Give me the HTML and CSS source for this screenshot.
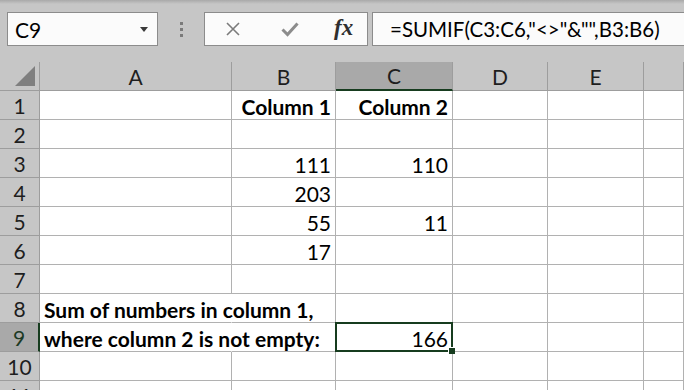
FILE: index.html
```html
<!DOCTYPE html>
<html lang="en">
<head>
    <meta charset="UTF-8">
    <title>SUMIF - Sheet</title>
    <link rel="stylesheet" href="styles.css">
</head>
<body>

    <div class="app">
        <!-- BARRA DE FÓRMULAS -->
        <div class="formula-bar">
            <div class="name-box">
                <span>C9</span>
                <span class="name-arrow"></span>
            </div>
            <div class="grip">
                <span></span><span></span><span></span>
            </div>
            <div class="fx-box">
                <svg class="icon-cancel" width="16" height="16" viewBox="0 0 16 16">
                    <path d="M2 2 L14 14 M14 2 L2 14" stroke="#7b7b7b" stroke-width="1.6" fill="none"/>
                </svg>
                <svg class="icon-enter" width="18" height="16" viewBox="0 0 18 16">
                    <path d="M1.5 8.5 L6.5 13.5 L16.5 2.5" stroke="#8c8c8c" stroke-width="3" fill="none"/>
                </svg>
                <span class="fx">fx</span>
            </div>
            <div class="formula-input">=SUMIF(C3:C6,"&lt;&gt;"&amp;"",B3:B6)</div>
        </div>

        <!-- PLANILHA -->
        <div class="sheet">
            <div class="corner"><span class="corner-tri"></span></div>
            <div class="col-head">A</div>
            <div class="col-head">B</div>
            <div class="col-head active">C</div>
            <div class="col-head">D</div>
            <div class="col-head">E</div>
            <div class="col-head"></div>

            <div class="row-head">1</div>
            <div class="cell"></div>
            <div class="cell num bold">Column 1</div>
            <div class="cell num bold">Column 2</div>
            <div class="cell"></div><div class="cell"></div><div class="cell"></div>

            <div class="row-head">2</div>
            <div class="cell"></div><div class="cell"></div><div class="cell"></div>
            <div class="cell"></div><div class="cell"></div><div class="cell"></div>

            <div class="row-head">3</div>
            <div class="cell"></div>
            <div class="cell num">111</div>
            <div class="cell num">110</div>
            <div class="cell"></div><div class="cell"></div><div class="cell"></div>

            <div class="row-head">4</div>
            <div class="cell"></div>
            <div class="cell num">203</div>
            <div class="cell"></div>
            <div class="cell"></div><div class="cell"></div><div class="cell"></div>

            <div class="row-head">5</div>
            <div class="cell"></div>
            <div class="cell num">55</div>
            <div class="cell num">11</div>
            <div class="cell"></div><div class="cell"></div><div class="cell"></div>

            <div class="row-head">6</div>
            <div class="cell"></div>
            <div class="cell num">17</div>
            <div class="cell"></div>
            <div class="cell"></div><div class="cell"></div><div class="cell"></div>

            <div class="row-head">7</div>
            <div class="cell"></div><div class="cell"></div><div class="cell"></div>
            <div class="cell"></div><div class="cell"></div><div class="cell"></div>

            <div class="row-head">8</div>
            <div class="cell bold overflow">Sum of numbers in column 1,</div>
            <div class="cell"></div>
            <div class="cell"></div>
            <div class="cell"></div><div class="cell"></div><div class="cell"></div>

            <div class="row-head active">9</div>
            <div class="cell bold overflow">where column 2 is not empty:</div>
            <div class="cell"></div>
            <div class="cell num selected">166</div>
            <div class="cell"></div><div class="cell"></div><div class="cell"></div>

            <div class="row-head">10</div>
            <div class="cell"></div><div class="cell"></div><div class="cell"></div>
            <div class="cell"></div><div class="cell"></div><div class="cell"></div>

            <div class="row-head">11</div>
            <div class="cell"></div><div class="cell"></div><div class="cell"></div>
            <div class="cell"></div><div class="cell"></div><div class="cell"></div>
        </div>
    </div>

</body>
</html>
```

FILE: styles.css
```css
/* Base */
body, html {
    margin: 0;
    padding: 0;
    height: 100%;
    overflow: hidden;
    font-family: 'Lato', 'Open Sans', sans-serif;
    background-color: #c6c6c6;
    color: #000;
}

.app {
    display: flex;
    flex-direction: column;
    height: 100vh;
}

/* Barra de fórmulas */
.formula-bar {
    height: 62px;
    flex-shrink: 0;
    display: flex;
    align-items: flex-start;
    padding-top: 12px;
    box-sizing: border-box;
    background: linear-gradient(#a9a9a9, #c6c6c6 4px);
}

.name-box, .fx-box, .formula-input {
    height: 34px;
    box-sizing: border-box;
    background-color: #fbfbfb;
    border: 1px solid #8c8c8c;
    display: flex;
    align-items: center;
}

.name-box {
    margin-left: 7px;
    width: 151px;
    padding-left: 7px;
    font-size: 21px;
    justify-content: space-between;
    padding-right: 9px;
}

.name-arrow {
    width: 0;
    height: 0;
    border-left: 4px solid transparent;
    border-right: 4px solid transparent;
    border-top: 5px solid #3a3a3a;
    margin-top: 1px;
}

.grip {
    width: 46px;
    display: flex;
    flex-direction: column;
    align-items: center;
    gap: 3px;
    padding-top: 10px;
}

.grip span {
    width: 3px;
    height: 3px;
    background-color: #7a7a7a;
}

.fx-box {
    width: 164px;
    padding-left: 20px;
}

.icon-cancel {
    margin-right: 40px;
}

.icon-enter {
    margin-right: 35px;
}

.fx {
    font-family: 'Liberation Serif', serif;
    font-style: italic;
    font-weight: 700;
    font-size: 23px;
    color: #2f2f2f;
    margin-top: -2px;
}

.formula-input {
    margin-left: 4px;
    flex: 1;
    border-right: none;
    padding-left: 17px;
    font-size: 20.5px;
}

/* Planilha */
.sheet {
    flex: 1;
    min-height: 0;
    overflow: hidden;
    display: grid;
    grid-template-columns: 40px 192px 104px 117px 95px 96px 1fr;
    grid-auto-rows: 29px;
    background-color: white;
    font-size: 21px;
}

.corner, .col-head, .row-head {
    background-color: #c6c6c6;
    border-right: 1px solid #9d9d9d;
    border-bottom: 1px solid #9d9d9d;
    box-sizing: border-box;
    display: flex;
    align-items: center;
    justify-content: center;
    color: #1e1e1e;
}

.corner {
    position: relative;
}

.corner-tri {
    position: absolute;
    right: 4px;
    bottom: 4px;
    width: 0;
    height: 0;
    border-left: 20px solid transparent;
    border-bottom: 20px solid #7f7f7f;
}

.col-head:last-child {
    border-right: none;
}

.col-head.active {
    background-color: #a9a9a9;
    border-bottom: 2px solid #173c1f;
}

.row-head.active {
    background-color: #a9a9a9;
    border-right: 2px solid #173c1f;
    color: #1c3a24;
}

.cell {
    border-right: 1px solid #b1b1b1;
    border-bottom: 1px solid #b1b1b1;
    box-sizing: border-box;
    display: flex;
    align-items: center;
    padding: 2px 4px 0;
    white-space: nowrap;
}

.num {
    justify-content: flex-end;
}

.bold {
    font-weight: 700;
}

.overflow {
    overflow: visible;
    border-right-color: transparent;
    position: relative;
    z-index: 1;
}

.selected {
    position: relative;
}

.selected::after {
    content: "";
    position: absolute;
    left: -1px;
    top: -1px;
    right: -1px;
    bottom: -1px;
    border: 2px solid #173c1f;
}

.selected::before {
    content: "";
    position: absolute;
    right: -3px;
    bottom: -3px;
    width: 6px;
    height: 6px;
    background-color: #173c1f;
    border-left: 1px solid white;
    border-top: 1px solid white;
    z-index: 2;
}
```
